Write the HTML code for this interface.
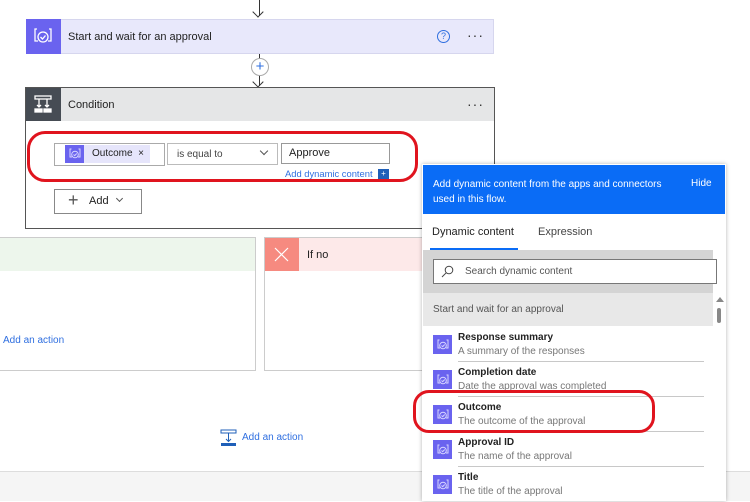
<!DOCTYPE html>
<html><head><style>
*{box-sizing:border-box;margin:0;padding:0}
body{width:750px;height:501px;overflow:hidden;background:#fff;font-family:"Liberation Sans",sans-serif;position:relative;color:#222}
.a{position:absolute}
.ic{background:#6a63ef}
.t{font-size:11px}
.link{color:#2f6fe0;font-size:10px}
.it{position:absolute;left:423px;width:290px;height:35px}
.it .i{position:absolute;left:10px;top:8px;width:19px;height:19px;background:#6a63ef}
.it .i svg{position:absolute;left:3px;top:3px}
.it b{position:absolute;left:35px;top:5px;font-size:10px;font-weight:bold;color:#222}
.it span{position:absolute;left:35px;top:19px;font-size:10px;color:#777}
.it i{position:absolute;left:35px;right:9px;bottom:0;border-bottom:1px solid #c8c8c8}
</style></head><body>
<svg width="0" height="0" style="position:absolute"><defs><g id="ap"><path d="M3.5 2H2v8h2M10.5 2H12v8h-2" stroke="#d8d6ff" fill="none" stroke-width="1"/><circle cx="7" cy="7.5" r="3.3" stroke="#d8d6ff" fill="none" stroke-width="1"/><path d="M5.5 7.5l1.2 1.2 2-2.2" stroke="#d8d6ff" fill="none" stroke-width="1"/></g></defs></svg>
<!-- top arrow -->
<div class="a" style="left:259px;top:0;width:1px;height:16px;background:#333"></div>
<div class="a" style="left:254px;top:8px;width:8px;height:8px;border-right:1.5px solid #333;border-bottom:1.5px solid #333;transform:rotate(45deg)"></div>
<!-- approval card -->
<div class="a" style="left:26px;top:19px;width:468px;height:35px;background:#e8e8fb;border:1px solid #d6d6ee"></div>
<div class="a ic" style="left:26px;top:19px;width:35px;height:35px"></div>
<svg class="a" style="left:32px;top:26px" width="22" height="20" viewBox="0 0 22 20"><path d="M5 3H3v12h3M17 3h2v12h-3" stroke="#fff" fill="none" stroke-width="1.3"/><circle cx="11" cy="11" r="5" stroke="#fff" fill="none" stroke-width="1.3"/><path d="M8.5 11l2 2 3-3.5" stroke="#fff" fill="none" stroke-width="1.3"/></svg>
<div class="a t" style="left:68px;top:31px;color:#222">Start and wait for an approval</div>
<div class="a" style="left:437px;top:30px;width:13px;height:13px;border:1.3px solid #2f6fe0;border-radius:50%;color:#2f6fe0;font-size:9px;text-align:center;line-height:11px">?</div>
<div class="a" style="left:467px;top:27px;font-size:14px;letter-spacing:1px;color:#333">···</div>
<!-- connector -->
<div class="a" style="left:259px;top:54px;width:1px;height:32px;background:#333"></div>
<div class="a" style="left:251px;top:58px;width:18px;height:18px;border:1px solid #aaa;border-radius:50%;background:#fff;color:#2f6fe0;font-size:15px;line-height:15px;text-align:center">+</div>
<div class="a" style="left:254px;top:78px;width:8px;height:8px;border-right:1.5px solid #333;border-bottom:1.5px solid #333;transform:rotate(45deg)"></div>
<!-- condition -->
<div class="a" style="left:25px;top:87px;width:470px;height:142px;border:1px solid #555;background:#fff"></div>
<div class="a" style="left:26px;top:88px;width:468px;height:33px;background:#e5e6e7"></div>
<div class="a" style="left:26px;top:88px;width:35px;height:33px;background:#464c54"></div>
<svg class="a" style="left:33px;top:94px" width="20" height="20" viewBox="0 0 20 20" stroke="#fff" fill="none" stroke-width="1.3"><rect x="2" y="2" width="16" height="3"/><path d="M6 5v8M14 5v8M4 11l2 2 2-2M12 11l2 2 2-2"/><rect x="2" y="15" width="7" height="3" fill="#fff"/><rect x="11" y="15" width="7" height="3" fill="#fff"/></svg>
<div class="a t" style="left:68px;top:99px">Condition</div>
<div class="a" style="left:467px;top:96px;font-size:14px;letter-spacing:1px;color:#333">···</div>
<!-- fields -->
<div class="a" style="left:54px;top:143px;width:111px;height:23px;border:1px solid #aaa"></div>
<div class="a" style="left:65px;top:145px;width:85px;height:18px;background:#e6e5fb"></div>
<div class="a ic" style="left:65px;top:145px;width:19px;height:18px"></div>
<svg class="a" style="left:68px;top:147px" width="14" height="14"><use href="#ap"/></svg>
<div class="a" style="left:92px;top:148px;font-size:10px">Outcome &nbsp;×</div>
<div class="a" style="left:167px;top:143px;width:111px;height:22px;border:1px solid #bbb"></div>
<div class="a" style="left:177px;top:149px;font-size:10px;color:#444">is equal to</div>
<div class="a" style="left:261px;top:148px;width:6px;height:6px;border-right:1px solid #555;border-bottom:1px solid #555;transform:rotate(45deg)"></div>
<div class="a" style="left:281px;top:143px;width:109px;height:21px;border:1px solid #999"></div>
<div class="a" style="left:289px;top:147px;font-size:11px">Approve</div>
<div class="a link" style="left:285px;top:168px;font-size:9.4px">Add dynamic content</div>
<div class="a" style="left:378px;top:169px;width:11px;height:10px;background:#1f5fb8;color:#fff;font-size:8px;text-align:center;line-height:10px">+</div>
<div class="a" style="left:27px;top:131px;width:391px;height:51px;border:3px solid #e0141e;border-radius:18px"></div>
<div class="a" style="left:54px;top:189px;width:88px;height:25px;border:1px solid #888"></div>
<div class="a" style="left:68px;top:191px;font-size:18px;color:#555;line-height:18px">+</div>
<div class="a" style="left:89px;top:195px;font-size:11px">Add</div>
<div class="a" style="left:117px;top:196px;width:5px;height:5px;border-right:1px solid #555;border-bottom:1px solid #555;transform:rotate(45deg)"></div>
<!-- branches -->
<div class="a" style="left:-2px;top:237px;width:258px;height:134px;border:1px solid #ccc"></div>
<div class="a" style="left:0;top:238px;width:255px;height:33px;background:#edf6ec"></div>
<div class="a link" style="left:3px;top:335px">Add an action</div>
<div class="a" style="left:264px;top:237px;width:200px;height:134px;border:1px solid #ccc"></div>
<div class="a" style="left:265px;top:238px;width:199px;height:33px;background:#fde9e9"></div>
<div class="a" style="left:265px;top:238px;width:34px;height:33px;background:#f68a80"></div>
<svg class="a" style="left:273px;top:246px" width="17" height="17"><path d="M2 2l13 13M15 2L2 15" stroke="#fff" stroke-width="1.2"/></svg>
<div class="a t" style="left:307px;top:249px">If no</div>
<svg class="a" style="left:220px;top:429px" width="18" height="18" viewBox="0 0 18 18"><rect x="1" y="1" width="15" height="3" stroke="#1f5fb8" fill="none"/><path d="M8.5 4v8M6 10l2.5 2.5L11 10" stroke="#1f5fb8" fill="none"/><rect x="1" y="14" width="15" height="3" fill="#1f5fb8"/></svg>
<div class="a link" style="left:242px;top:432px">Add an action</div>
<div class="a" style="left:0;top:471px;width:750px;height:30px;background:#f5f5f5;border-top:1px solid #ddd"></div>
<!-- panel -->
<div class="a" style="left:422px;top:164px;width:304px;height:337px;background:#fff;box-shadow:0 0 4px rgba(0,0,0,.3)"></div>
<div class="a" style="left:423px;top:165px;width:302px;height:49px;background:#0a6cf6"></div>
<div class="a" style="left:433px;top:177px;font-size:10px;color:#fff;line-height:15px;width:250px">Add dynamic content from the apps and connectors used in this flow.</div>
<div class="a" style="left:691px;top:178px;font-size:10px;color:#fff">Hide</div>
<div class="a t" style="left:432px;top:226px;color:#222">Dynamic content</div>
<div class="a t" style="left:538px;top:226px;color:#444">Expression</div>
<div class="a" style="left:430px;top:248px;width:88px;height:2px;background:#0a6cf6"></div>
<div class="a" style="left:423px;top:250px;width:290px;height:43px;background:#d4d4d4"></div>
<div class="a" style="left:433px;top:259px;width:284px;height:25px;background:#fff;border:1px solid #777"></div>
<svg class="a" style="left:441px;top:265px" width="13" height="13" viewBox="0 0 13 13"><circle cx="8" cy="5" r="3.8" stroke="#444" fill="none"/><path d="M5.3 7.7L1 12" stroke="#444"/></svg>
<div class="a" style="left:465px;top:266px;font-size:10px;color:#555">Search dynamic content</div>
<div class="a" style="left:423px;top:293px;width:290px;height:33px;background:#e8e8e8"></div>
<div class="a" style="left:433px;top:304px;font-size:10px;color:#555">Start and wait for an approval</div>
<div class="a" style="left:716px;top:297px;width:0;height:0;border:4px solid transparent;border-bottom:5px solid #888;border-top:0"></div>
<div class="a" style="left:717px;top:308px;width:4px;height:15px;background:#888;border-radius:2px"></div>
<div class="it" style="top:327px"><div class="i"><svg width="14" height="14"><use href="#ap"/></svg></div><b>Response summary</b><span>A summary of the responses</span><i></i></div>
<div class="it" style="top:362px"><div class="i"><svg width="14" height="14"><use href="#ap"/></svg></div><b>Completion date</b><span>Date the approval was completed</span><i></i></div>
<div class="it" style="top:397px"><div class="i"><svg width="14" height="14"><use href="#ap"/></svg></div><b>Outcome</b><span>The outcome of the approval</span><i></i></div>
<div class="it" style="top:432px"><div class="i"><svg width="14" height="14"><use href="#ap"/></svg></div><b>Approval ID</b><span>The name of the approval</span><i></i></div>
<div class="it" style="top:467px"><div class="i"><svg width="14" height="14"><use href="#ap"/></svg></div><b>Title</b><span>The title of the approval</span></div>
<div class="a" style="left:413px;top:390px;width:242px;height:43px;border:3px solid #e0141e;border-radius:16px"></div>
</body></html>
